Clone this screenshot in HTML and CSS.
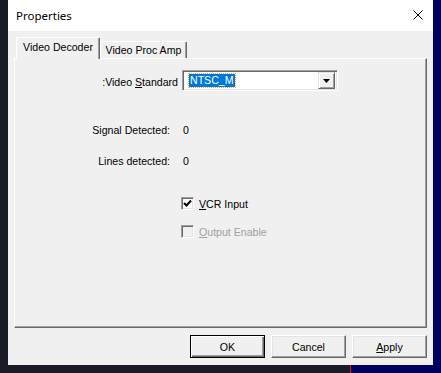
FILE: index.html
```html
<!DOCTYPE html>
<html>
<head>
<meta charset="utf-8">
<link rel="stylesheet" href="styles.css">
</head>
<body>
<div class="screen">
  <div class="left-strip"></div>
  <div class="dialog">
    <div class="titlebar">
      <span class="title">Properties</span>
      <svg class="close" width="10" height="10" viewBox="0 0 10 10"><path d="M0.5 0.5 L9.5 9.5 M9.5 0.5 L0.5 9.5" stroke="#000" stroke-width="1" fill="none"/></svg>
    </div>
    <div class="body">
      <div class="tabs">
        <div class="tab selected">Video Decoder</div>
        <div class="tab">Video Proc Amp</div>
      </div>
      <div class="panel">
        <div class="row-std">
          <span class="lbl-std">:Video <u>S</u>tandard</span>
          <div class="combo">
            <div class="combo-text"><span class="sel">NTSC_M</span></div>
            <div class="combo-btn"><svg width="7" height="4" viewBox="0 0 7 4"><path d="M0 0 H7 L3.5 4 Z" fill="#000"/></svg></div>
          </div>
        </div>
        <div class="row-info first">
          <span class="lbl-info">Signal Detected:</span>
          <span class="val">0</span>
        </div>
        <div class="row-info second">
          <span class="lbl-info">Lines detected:</span>
          <span class="val">0</span>
        </div>
        <div class="check-row c1">
          <span class="box"><svg width="9" height="9" viewBox="0 0 9 9"><path d="M1 4 L3.5 6.5 L8 1.5" stroke="#000" stroke-width="2" fill="none"/></svg></span>
          <span class="clabel"><u>V</u>CR Input</span>
        </div>
        <div class="check-row c2 disabled">
          <span class="box"></span>
          <span class="clabel"><u>O</u>utput Enable</span>
        </div>
      </div>
      <div class="buttons">
        <div class="btn default">OK</div>
        <div class="btn">Cancel</div>
        <div class="btn"><u>A</u>pply</div>
      </div>
    </div>
  </div>
  <div class="right-strip"></div>
  <div class="bottom-strip">
    <div class="bs-dark"></div>
    <div class="bs-red"></div>
    <div class="bs-navy"></div>
  </div>
</div>
</body>
</html>
```
FILE: styles.css
```css
html, body {
  margin: 0;
  padding: 0;
}
body {
  width: 441px;
  height: 373px;
  overflow: hidden;
  background: #191c26;
  font-family: "Liberation Sans", Arial, sans-serif;
  font-size: 10.6px;
  color: #000;
}
.screen {
  display: grid;
  grid-template-columns: 8px 425px 8px;
  grid-template-rows: 365px 8px;
  width: 441px;
  height: 373px;
}
.left-strip {
  background: #191c26;
}
.right-strip {
  grid-column: 3;
  grid-row: 1;
  background: #00005e;
}
.bottom-strip {
  grid-column: 1 / 4;
  grid-row: 2;
  display: flex;
}
.bs-dark { width: 350px; background: #191c26; }
.bs-red { width: 1px; background: #e0141e; }
.bs-navy { flex: 1; background: #00005e; }

.dialog {
  background: #f0f0f0;
  display: flex;
  flex-direction: column;
}
.titlebar {
  height: 31px;
  background: #fff;
  display: flex;
  align-items: center;
  justify-content: space-between;
  padding: 0 10px 0 8px;
}
.title {
  font-family: "Noto Sans", "Segoe UI", sans-serif;
  font-size: 11.5px;
  margin-top: -1px;
}
.close {
  display: block;
  margin-top: -1px;
}
.body {
  display: flex;
  flex-direction: column;
  padding: 6px 6px 0 6px;
}
.tabs {
  display: flex;
  align-items: flex-end;
  height: 21px;
  padding-left: 2px;
}
.tab {
  box-sizing: border-box;
  height: 17px;
  width: 87px;
  border-left: 1px solid #fff;
  border-top: 1px solid #fff;
  border-right: 1px solid #696969;
  box-shadow: inset -1px 0 0 #a0a0a0;
  border-radius: 2px 2px 0 0;
  text-align: center;
  line-height: 15px;
  padding-top: 1px;
}
.tab.selected {
  width: 84px;
  height: 22px;
  margin-bottom: -1px;
  position: relative;
  z-index: 1;
  background: #f0f0f0;
  line-height: 17px;
  padding-top: 1px;
}
.panel {
  box-sizing: border-box;
  height: 270px;
  border: 1px solid;
  border-color: #fff #696969 #696969 #fff;
  box-shadow: inset -1px -1px 0 #a0a0a0;
  display: flex;
  flex-direction: column;
}
.row-std {
  display: flex;
  align-items: center;
  height: 21px;
  margin-top: 11px;
}
.lbl-std {
  width: 163px;
  text-align: right;
  margin-right: 4px;
  padding-top: 2px;
}
.combo {
  box-sizing: border-box;
  width: 156px;
  height: 21px;
  border: 1px solid;
  border-color: #a0a0a0 #fff #fff #a0a0a0;
  box-shadow: inset 1px 1px 0 #696969, inset -1px -1px 0 #e3e3e3;
  background: #fff;
  display: flex;
  align-items: center;
  padding: 2px 2px 2px 2px;
}
.combo-text {
  flex: 1;
  padding-left: 4px;
  display: flex;
  align-items: center;
}
.sel {
  background: #0078d7;
  color: #fff;
  line-height: 13px;
  padding: 0 1px;
  outline: 1px dotted #f0a848;
}
.combo-btn {
  box-sizing: border-box;
  width: 17px;
  height: 17px;
  background: #f0f0f0;
  border: 1px solid;
  border-color: #e3e3e3 #696969 #696969 #e3e3e3;
  box-shadow: inset 1px 1px 0 #fff, inset -1px -1px 0 #a0a0a0;
  display: flex;
  align-items: center;
  justify-content: center;
}
.combo-btn svg { display: block; }
.row-info {
  display: flex;
  line-height: 13px;
}
.row-info.first { margin-top: 33px; }
.row-info.second { margin-top: 18px; }
.lbl-info {
  width: 155px;
  text-align: right;
  margin-right: 13px;
}
.check-row {
  display: flex;
  align-items: center;
  height: 13px;
  margin-left: 166px;
}
.check-row.c1 { margin-top: 29px; }
.check-row.c2 { margin-top: 15px; }
.box {
  box-sizing: border-box;
  width: 13px;
  height: 13px;
  border: 1px solid;
  border-color: #a0a0a0 #fff #fff #a0a0a0;
  box-shadow: inset 1px 1px 0 #696969, inset -1px -1px 0 #e3e3e3;
  background: #fff;
  display: flex;
  align-items: center;
  justify-content: center;
  margin-right: 5px;
}
.box svg { display: block; }
.disabled .box { background: #f0f0f0; }
.disabled .clabel { color: #a0a0a0; }
.buttons {
  display: flex;
  justify-content: flex-end;
  gap: 6px;
  margin-top: 7px;
}
.btn {
  box-sizing: border-box;
  width: 75px;
  height: 23px;
  border: 1px solid;
  border-color: #fff #696969 #696969 #fff;
  box-shadow: inset -1px -1px 0 #a0a0a0, inset 1px 1px 0 #e3e3e3;
  display: flex;
  align-items: center;
  justify-content: center;
}
.btn.default {
  border: 1px solid #000;
  box-shadow: inset 1px 1px 0 #fff, inset -1px -1px 0 #696969, inset -2px -2px 0 #a0a0a0;
}
```
